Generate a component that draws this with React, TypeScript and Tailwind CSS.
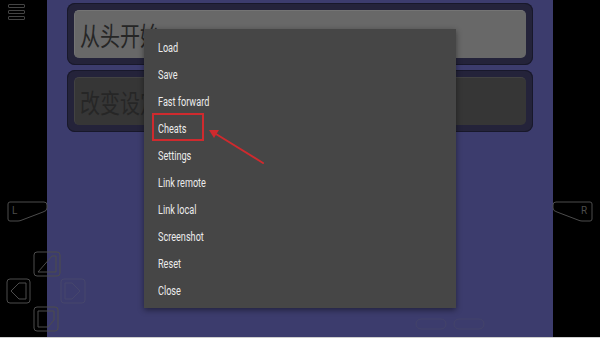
import React from 'react';

const menuItems = ['Load', 'Save', 'Fast forward', 'Cheats', 'Settings', 'Link remote', 'Link local', 'Screenshot', 'Reset', 'Close'];

function GameButton({ label, dark }: { label: string; dark?: boolean }) {
  return (
    <div className="h-[62px] rounded-[8px] bg-[#24233a] p-[7px] shadow-[inset_0_0_0_1px_#18182a]">
      <div
        className={`h-full rounded-[5px] border-t border-l flex items-center px-[5px] ${
          dark ? 'bg-[#363636] border-[#424242]' : 'bg-[#686868] border-[#747474]'
        }`}
      >
        <span
          className="origin-left scale-x-[0.77] text-[26px] leading-none font-normal text-[#262626] whitespace-nowrap"
          style={{ fontFamily: '"Noto Sans CJK SC", sans-serif' }}
        >
          {label}
        </span>
      </div>
    </div>
  );
}

function Hamburger() {
  return (
    <div className="flex flex-col gap-[2px] w-[17px] pt-[4px] pl-[8px] box-content">
      <div className="h-[4px] rounded-[1px] border border-[#444]" />
      <div className="h-[4px] rounded-[1px] border border-[#444]" />
      <div className="h-[4px] rounded-[1px] border border-[#444]" />
    </div>
  );
}

function Controls() {
  const stroke = '#4c4c4c';
  const faint = '#46466c';
  return (
    <svg className="absolute inset-0 pointer-events-none" width="600" height="338" viewBox="0 0 600 338">
      {/* L shoulder */}
      <path d="M10 202 H44 Q47 202 47 205 V208 Q47 211 43 212 L22 220 Q20 221 18 221 H10 Q8 221 8 219 V204 Q8 202 10 202 Z" fill="none" stroke={stroke} strokeWidth="1" />
      <text x="12" y="214" fontSize="10" fill={stroke} fontFamily="Roboto, sans-serif">L</text>
      {/* R shoulder */}
      <path d="M590 202 H556 Q553 202 553 205 V208 Q553 211 557 212 L578 220 Q580 221 582 221 H590 Q592 221 592 219 V204 Q592 202 590 202 Z" fill="none" stroke={stroke} strokeWidth="1" />
      <text x="581" y="214" fontSize="10" fill={stroke} fontFamily="Roboto, sans-serif">R</text>
      {/* d-pad up */}
      <rect x="34" y="252" width="26" height="24" rx="3" fill="none" stroke={stroke} />
      <path d="M38 272 L52 256 H56 V272 Z" fill="none" stroke={stroke} />
      {/* d-pad left */}
      <rect x="7" y="279" width="23" height="24" rx="3" fill="none" stroke={stroke} />
      <path d="M11 291 L19 283 H26 V299 H19 Z" fill="none" stroke={stroke} />
      {/* d-pad right (over the screen) */}
      <rect x="61" y="279" width="24" height="24" rx="3" fill="none" stroke={faint} />
      <path d="M65 283 H72 L80 291 L72 299 H65 Z" fill="none" stroke={faint} />
      {/* d-pad down */}
      <rect x="34" y="307" width="24" height="24" rx="3" fill="none" stroke={stroke} />
      <path d="M38 311 H54 V320 L48 327 H38 Z" fill="none" stroke={stroke} />
      {/* select / start, faint */}
      <rect x="416" y="319" width="30" height="10" rx="5" fill="none" stroke="#43436a" />
      <rect x="454" y="319" width="30" height="10" rx="5" fill="none" stroke="#43436a" />
    </svg>
  );
}

export default function App() {
  return (
    <div className="relative w-[600px] h-[338px] overflow-hidden bg-black" style={{ fontFamily: 'Roboto, sans-serif' }}>
      <div className="flex h-full">
        <div className="w-[47px] shrink-0 bg-black">
          <Hamburger />
        </div>
        <div className="w-[506px] shrink-0 bg-[#3c3c6d] flex flex-col gap-[5px] px-[20px] pt-[3px]">
          <GameButton label="从头开始" />
          <GameButton label="改变设定" dark />
        </div>
        <div className="w-[47px] shrink-0 bg-black" />
      </div>

      <Controls />

      {/* popup menu */}
      <div className="absolute left-[144px] top-[29px] w-[312px] h-[279px] bg-[#464646] py-[5px] shadow-[0_2px_6px_rgba(0,0,0,0.45)]">
        {menuItems.map((item) => (
          <div key={item} className="h-[27px] flex items-center px-[14px]">
            <span className="origin-left scale-x-[0.76] text-[12px] leading-none text-[#ececec] whitespace-nowrap">
              {item}
            </span>
          </div>
        ))}
      </div>

      {/* highlight box on Cheats */}
      <div className="absolute left-[152px] top-[113px] w-[52px] h-[28px] border-2 border-[#cf2a2e]" />

      {/* arrow pointing at Cheats */}
      <svg className="absolute inset-0 pointer-events-none" width="600" height="338" viewBox="0 0 600 338">
        <line x1="263" y1="163" x2="216" y2="134" stroke="#cf2a2e" strokeWidth="2" strokeLinecap="round" />
        <polygon points="209,130 219,130 214,138" fill="#cf2a2e" />
      </svg>

      <div className="absolute left-0 right-0 bottom-0 h-px bg-[#cfcfcf]" />
    </div>
  );
}
